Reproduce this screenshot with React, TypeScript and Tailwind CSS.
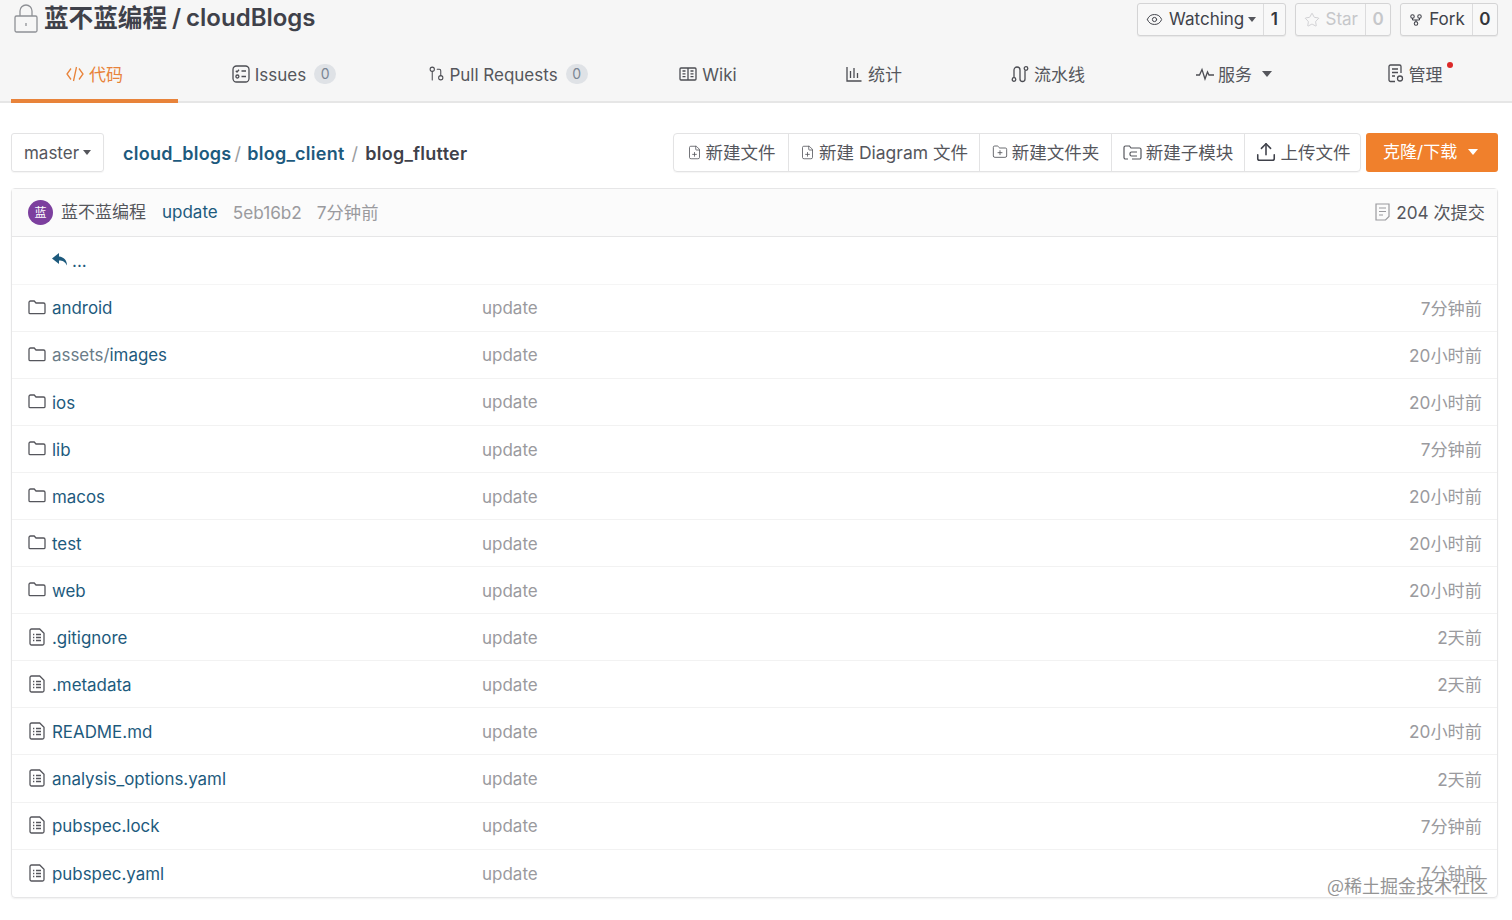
import React from "react";
import { Eye, Star, GitFork, GitPullRequest, Upload, FilePlus, FolderPlus } from "lucide-react";

const FONT = "font-['Inter','Noto_Sans_CJK_SC',sans-serif]";

const Folder = () => (
  <svg width="18" height="15" viewBox="0 0 18 15" fill="none" stroke="#55565c" strokeWidth="1.300" className="shrink-0 -mt-[1px]">
    <path d="M1 2.500A1.500 1.500 0 0 1 2.500 1h3.700l1.800 2h7.500A1.500 1.500 0 0 1 17 4.500v8a1.200 1.200 0 0 1-1.200 1.200H2.200A1.200 1.200 0 0 1 1 12.500z" />
  </svg>
);

const Doc = () => (
  <svg width="16" height="18" viewBox="0 0 16 18" fill="none" stroke="#55565c" strokeWidth="1.300" className="shrink-0 ml-[1px] mr-[1px] -mt-[1px]">
    <path d="M3 1h7.700L15 5.300V15.500a1.500 1.500 0 0 1-1.500 1.500h-11A1.500 1.500 0 0 1 1 15.500V2.500A1.500 1.500 0 0 1 2.500 1z" />
    <path d="M4 6.500h1.300M7 6.500h5M4 9.500h1.300M7 9.500h5M4 12.500h1.300M7 12.500h5" />
  </svg>
);

const Lock = () => (
  <svg width="24" height="30" viewBox="0 0 24 30" fill="none" stroke="#8f9196" strokeWidth="1.300" className="shrink-0">
    <path d="M6 13V8a6 6 0 0 1 12 0v5" />
    <rect x="1" y="13" width="22" height="16" rx="1.500" fill="#f6f6f6" />
    <path d="M12 20v3" />
  </svg>
);

const CodeIcon = () => (
  <svg width="18" height="18" viewBox="0 0 18 18" fill="none" stroke="#e8833a" strokeWidth="1.300">
    <path d="M5 3.500 1 9l4 5.500M13 3.500 17 9l-4 5.500M10.500 2 7.500 16" />
  </svg>
);
const IssueIcon = () => (
  <svg width="18" height="18" viewBox="0 0 18 18" fill="none" stroke="#4c4d53" strokeWidth="1.300">
    <rect x="1" y="1" width="16" height="16" rx="3.500" />
    <path d="m3.800 5.800 1.200 1.200 2-2.200M9.500 6h4.500M9.500 11.500h4.500" />
    <circle cx="5.400" cy="11.500" r="1.500" />
  </svg>
);
const WikiIcon = () => (
  <svg width="18" height="14" viewBox="0 0 18 14" fill="none" stroke="#4c4d53" strokeWidth="1.300">
    <rect x="1" y="1" width="16" height="12" rx="1" />
    <path d="M9 1v12M3.500 4h3M3.500 6.800h3M3.500 9.600h3M11.500 4h3M11.500 6.800h3M11.500 9.600h3" />
  </svg>
);
const ChartIcon = () => (
  <svg width="16" height="16" viewBox="0 0 16 16" fill="none" stroke="#4c4d53" strokeWidth="1.300">
    <path d="M1 1v14h14.500M4.500 12V5M8 12V2M11.500 12V7" />
  </svg>
);
const PipeIcon = () => (
  <svg width="18" height="18" viewBox="0 0 18 18" fill="none" stroke="#4c4d53" strokeWidth="1.300">
    <circle cx="3" cy="14.500" r="1.800" />
    <circle cx="15" cy="3.500" r="1.800" />
    <path d="M3 12.700V5a3 3 0 0 1 6 0v9a2.500 2.500 0 0 0 5 0V5.500" />
  </svg>
);
const PulseIcon = () => (
  <svg width="18" height="14" viewBox="0 0 18 14" fill="none" stroke="#4c4d53" strokeWidth="1.300">
    <path d="M0 8h3.500L6 2.500 9 12l2.500-7 1.500 3h5" />
  </svg>
);
const ManageIcon = () => (
  <svg width="16" height="19" viewBox="0 0 16 19" fill="none" stroke="#4c4d53" strokeWidth="1.300">
    <path d="M7 17.500H2.500A1.500 1.500 0 0 1 1 16V2.500A1.500 1.500 0 0 1 2.500 1h9A1.500 1.500 0 0 1 13 2.500V9" />
    <path d="M4 5h6M4 8.500h6M4 12h3" />
    <circle cx="12" cy="14.500" r="2.500" />
  </svg>
);
const SubmoduleIcon = () => (
  <svg width="19" height="15" viewBox="0 0 19 15" fill="none" stroke="#55565c" strokeWidth="1.200">
    <path d="M5 14H2.500A1.500 1.500 0 0 1 1 12.500v-10A1.500 1.500 0 0 1 2.500 1h4l1.500 2h8.500A1.500 1.500 0 0 1 18 4.500v8a1.500 1.500 0 0 1-1.500 1.500H9" />
    <path d="M14 7H8.500a1.500 1.500 0 0 0-1.500 1.500v1A1.500 1.500 0 0 0 8.500 11H14" />
  </svg>
);
const Caret = ({ c = "border-t-[#55565c]", w = "border-x-[4.500px] border-t-[5px]" }: { c?: string; w?: string }) => (
  <span className={`inline-block w-0 h-0 border-x-transparent ${c} ${w}`} />
);

const Btn = ({ icon, label, n, muted }: { icon: React.ReactNode; label: React.ReactNode; n: string; muted?: boolean }) => (
  <div className={`flex h-[33px] items-stretch rounded-[3px] border border-[#d4d4d5] bg-[#f8f8f8] shadow-[0_1px_1px_rgba(0,0,0,0.06)] text-[17px] ${muted ? "text-[#c6c7ca]" : "text-[#40424a]"}`}>
    <div className="flex items-center gap-[6px] pl-[8px] pr-[7px]">{icon}{label}</div>
    <div className={`flex items-center justify-center border-l border-[#dcdcdd] px-[6.500px] font-semibold ${muted ? "text-[#c6c7ca]" : "text-[#34363c]"}`}>{n}</div>
  </div>
);

const Badge = ({ n }: { n: string }) => (
  <span className="ml-[8px] flex h-[20px] w-[22px] items-center justify-center rounded-full bg-[#dfe2e6] text-[14px] text-[#7b8694]">{n}</span>
);

const tabs: { w: string; content: React.ReactNode; active?: boolean }[] = [
  { w: "w-[167px]", active: true, content: <><CodeIcon /><span className="ml-[5px] pt-[4px]">代码</span></> },
  { w: "w-[212px]", content: <><IssueIcon /><span className="ml-[5px] pt-[4px]">Issues</span><Badge n="0" /></> },
  { w: "w-[236px]", content: <><GitPullRequest size={17} strokeWidth={1.500} color="#4c4d53" /><span className="ml-[4px] pt-[4px]">Pull Requests</span><Badge n="0" /></> },
  { w: "w-[164px]", content: <><WikiIcon /><span className="ml-[5px] pt-[4px]">Wiki</span></> },
  { w: "w-[168px]", content: <><ChartIcon /><span className="ml-[6px] pt-[4px]">统计</span></> },
  { w: "w-[180px]", content: <><PipeIcon /><span className="ml-[5px] pt-[4px]">流水线</span></> },
  { w: "w-[192px]", content: <><PulseIcon /><span className="ml-[4px] pt-[4px]">服务</span><Caret w="ml-[10px] border-x-[5.500px] border-t-[6px]" /></> },
  { w: "w-[180px]", content: <><ManageIcon /><span className="ml-[5px] pt-[4px]">管理</span><span className="relative -top-[9px] ml-[4px] h-[6px] w-[6px] rounded-full bg-[#db2828]" /></> },
];

const actions: { icon: React.ReactNode; label: string; w: string }[] = [
  { icon: <FilePlus size={15} strokeWidth={1.300} />, label: "新建文件", w: "w-[114px]" },
  { icon: <FilePlus size={15} strokeWidth={1.300} />, label: "新建 Diagram 文件", w: "w-[191px]" },
  { icon: <FolderPlus size={16} strokeWidth={1.300} />, label: "新建文件夹", w: "w-[132px]" },
  { icon: <SubmoduleIcon />, label: "新建子模块", w: "w-[133px]" },
  { icon: <Upload size={22} strokeWidth={1.700} color="#3f414a" />, label: "上传文件", w: "w-[116px]" },
];

const rows: [string, string, boolean][] = [
  ["android", "7分钟前", true],
  ["assets/images", "20小时前", true],
  ["ios", "20小时前", true],
  ["lib", "7分钟前", true],
  ["macos", "20小时前", true],
  ["test", "20小时前", true],
  ["web", "20小时前", true],
  [".gitignore", "2天前", false],
  [".metadata", "2天前", false],
  ["README.md", "20小时前", false],
  ["analysis_options.yaml", "2天前", false],
  ["pubspec.lock", "7分钟前", false],
  ["pubspec.yaml", "7分钟前", false],
];

export default function App() {
  return (
    <div className={`${FONT} relative h-[920px] w-[1512px] overflow-hidden bg-white text-[17px]`}>
      <header className="h-[103px] border-b-2 border-[#e6e6e6] bg-[#f6f6f6]">
        <div className="flex h-[47px] items-start justify-between pl-[14px] pr-[14px]">
          <div className="flex h-[36px] items-center gap-[6px] text-[24.600px] font-semibold leading-none text-[#3f414a]">
            <Lock />
            <span>蓝不蓝编程</span>
            <span className="-ml-[1px] text-[24px]">/</span>
            <span className="-ml-[1px] text-[24px]">cloudBlogs</span>
          </div>
          <div className="mt-[3px] flex gap-[9px]">
            <Btn icon={<Eye size={17} strokeWidth={1.400} />} label={<span className="flex items-center gap-[4px]">Watching<Caret w="border-x-[4px] border-t-[5px]" /></span>} n="1" />
            <Btn muted icon={<Star size={16} strokeWidth={1.200} />} label="Star" n="0" />
            <Btn icon={<GitFork size={14} strokeWidth={1.800} />} label="Fork" n="0" />
          </div>
        </div>
        <nav className="flex pl-[11px] text-[#55565c]">
          {tabs.map((t, i) => (
            <div key={i} className={`flex h-[56px] items-center justify-center border-b-[4px] pt-[1px] ${t.w} ${t.active ? "border-[#e8833a] text-[#e8833a]" : "border-transparent"}`}>
              {t.content}
            </div>
          ))}
        </nav>
      </header>

      <div className="px-[11px] pr-[14px]">
        <div className="mt-[29px] flex h-[40px] items-center">
          <div className="flex h-[39px] w-[93px] items-center justify-center gap-[4px] rounded-[3px] border border-[#e3e3e4] text-[#55565c] shadow-[0_1px_1px_rgba(0,0,0,0.04)]">
            <span className="pt-[3px]">master</span><Caret />
          </div>
          <div className="ml-[19px] flex items-center pt-[2px] text-[18px] font-semibold tracking-[0.25px] text-[#1d5a7d]">
            <span>cloud_blogs</span>
            <span className="mx-[3px] font-normal text-[#9a9ca0]">/</span>
            <span className="ml-[3px]">blog_client</span>
            <span className="mx-[7px] font-normal text-[#9a9ca0]">/</span>
            <span className="text-[#3f414a]">blog_flutter</span>
          </div>
          <div className="ml-auto flex items-center gap-[5px]">
            <div className="flex h-[39px] rounded-[4px] border border-[#e3e3e4] text-[17.500px] text-[#55565c] shadow-[0_1px_1px_rgba(0,0,0,0.04)]">
              {actions.map((a, i) => (
                <div key={i} className={`flex items-center justify-center gap-[4px] whitespace-nowrap ${a.w} ${i ? "border-l border-[#e3e3e4]" : ""}`}>
                  {a.icon}<span className="pt-[3px]">{a.label}</span>
                </div>
              ))}
            </div>
            <div className="flex h-[39px] w-[132px] items-center gap-[11px] rounded-[3px] bg-[#f0802c] pl-[17px] text-white">
              <span className="pt-[2px]">克隆/下载</span><Caret c="border-t-white" w="border-x-[5px] border-t-[6px]" />
            </div>
          </div>
        </div>

        <div className="mt-[16px] rounded-[4px] border border-[#e6e6e7] shadow-[0_1px_2px_rgba(0,0,0,0.06)]">
          <div className="flex h-[48px] items-center border-b border-[#e6e6e7] bg-[#fbfbfb] pl-[16px] pr-[12px]">
            <span className="flex h-[25px] w-[25px] items-center justify-center rounded-full bg-[#7c3f9e] text-[12px] text-white">蓝</span>
            <span className="ml-[8px] text-[#55565c]">蓝不蓝编程</span>
            <span className="ml-[16px] text-[#1d5a7d]">update</span>
            <span className="ml-[15px] text-[17.200px] text-[#9a9a9e]">5eb16b2</span>
            <span className="ml-[15px] text-[17.300px] text-[#9a9a9e]">7分钟前</span>
            <span className="ml-auto flex items-center gap-[6px] text-[#55565c]">
              <svg width="15" height="18" viewBox="0 0 15 18" fill="none" stroke="#9a9a9e" strokeWidth="1.200">
                <path d="M1 1h13v12.500L10.500 17H1zM4 5h7M4 8.500h7M4 12h4" />
              </svg>
              <span className="text-[17.200px]">204 次提交</span>
            </span>
          </div>
          <div className="flex h-[47.500px] items-center border-b border-[#f5f5f5] pl-[40px]">
            <svg width="16" height="14" viewBox="0 0 16 14" fill="#1d5a7d"><path d="M7 0 0 5.500 7 11V7.500c3.500 0 6 1 8 5C15 7.500 12 4 7 3.500z" /></svg>
            <span className="ml-[4px] pt-[2px] text-[#1d5a7d]">...</span>
          </div>
          {rows.map(([name, time, dir], i) => (
            <div key={name} className={`grid h-[47.100px] grid-cols-[454px_1fr_auto] items-center pl-[16px] pr-[15px] ${i < rows.length - 1 ? "border-b border-[#f2f2f2]" : ""}`}>
              <div className="flex items-center gap-[6px] text-[16.900px] text-[#1d5a7d]">
                {dir ? <Folder /> : <Doc />}
                {name === "assets/images"
                  ? <span className="pt-[3px]"><span className="text-[#6b7c88]">assets/</span>images</span>
                  : <span className="pt-[3px]">{name}</span>}
              </div>
              <div className="pt-[3px] text-[#9a9a9e]">update</div>
              <div className="pt-[2px] text-[17.200px] text-[#9a9a9e]">{time}</div>
            </div>
          ))}
        </div>
      </div>

      <div className="absolute left-[1327px] top-[873px] font-['Noto_Sans_CJK_SC',sans-serif] text-[18px] font-normal leading-[24px] text-[#7a7a7a] opacity-80">@稀土掘金技术社区</div>
    </div>
  );
}
